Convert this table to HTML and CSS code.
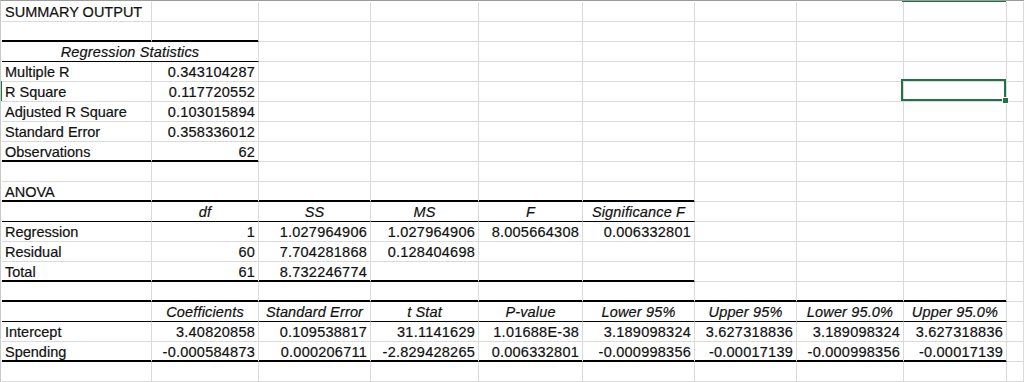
FILE: index.html
```html
<!DOCTYPE html>
<html>
<head>
<meta charset="utf-8">
<link rel="stylesheet" href="styles.css">
</head>
<body>
<div class="sheet">
  <div class="row"><div class="c">SUMMARY OUTPUT</div><div class="c"></div><div class="c"></div><div class="c"></div><div class="c"></div><div class="c"></div><div class="c"></div><div class="c"></div><div class="c"></div><div class="c"></div></div>
  <div class="row"><div class="c tk"></div><div class="c tk"></div><div class="c"></div><div class="c"></div><div class="c"></div><div class="c"></div><div class="c"></div><div class="c"></div><div class="c"></div><div class="c"></div></div>
  <div class="row"><div class="c hd span2 tn">Regression Statistics</div><div class="c"></div><div class="c"></div><div class="c"></div><div class="c"></div><div class="c"></div><div class="c"></div><div class="c"></div><div class="c"></div></div>
  <div class="row"><div class="c">Multiple R</div><div class="c n">0.343104287</div><div class="c"></div><div class="c"></div><div class="c"></div><div class="c"></div><div class="c"></div><div class="c"></div><div class="c"></div><div class="c"></div></div>
  <div class="row"><div class="c">R Square</div><div class="c n">0.117720552</div><div class="c"></div><div class="c"></div><div class="c"></div><div class="c"></div><div class="c"></div><div class="c"></div><div class="c"></div><div class="c"></div></div>
  <div class="row"><div class="c">Adjusted R Square</div><div class="c n">0.103015894</div><div class="c"></div><div class="c"></div><div class="c"></div><div class="c"></div><div class="c"></div><div class="c"></div><div class="c"></div><div class="c"></div></div>
  <div class="row"><div class="c">Standard Error</div><div class="c n">0.358336012</div><div class="c"></div><div class="c"></div><div class="c"></div><div class="c"></div><div class="c"></div><div class="c"></div><div class="c"></div><div class="c"></div></div>
  <div class="row"><div class="c tk">Observations</div><div class="c n tk">62</div><div class="c"></div><div class="c"></div><div class="c"></div><div class="c"></div><div class="c"></div><div class="c"></div><div class="c"></div><div class="c"></div></div>
  <div class="row"><div class="c"></div><div class="c"></div><div class="c"></div><div class="c"></div><div class="c"></div><div class="c"></div><div class="c"></div><div class="c"></div><div class="c"></div><div class="c"></div></div>
  <div class="row"><div class="c tk">ANOVA</div><div class="c tk"></div><div class="c tk"></div><div class="c tk"></div><div class="c tk"></div><div class="c tk"></div><div class="c"></div><div class="c"></div><div class="c"></div><div class="c"></div></div>
  <div class="row"><div class="c tn"></div><div class="c hd tn">df</div><div class="c hd tn">SS</div><div class="c hd tn">MS</div><div class="c hd tn">F</div><div class="c hd tn">Significance F</div><div class="c"></div><div class="c"></div><div class="c"></div><div class="c"></div></div>
  <div class="row"><div class="c">Regression</div><div class="c n">1</div><div class="c n">1.027964906</div><div class="c n">1.027964906</div><div class="c n">8.005664308</div><div class="c n">0.006332801</div><div class="c"></div><div class="c"></div><div class="c"></div><div class="c"></div></div>
  <div class="row"><div class="c">Residual</div><div class="c n">60</div><div class="c n">7.704281868</div><div class="c n">0.128404698</div><div class="c"></div><div class="c"></div><div class="c"></div><div class="c"></div><div class="c"></div><div class="c"></div></div>
  <div class="row"><div class="c tk">Total</div><div class="c n tk">61</div><div class="c n tk">8.732246774</div><div class="c tk"></div><div class="c tk"></div><div class="c tk"></div><div class="c"></div><div class="c"></div><div class="c"></div><div class="c"></div></div>
  <div class="row"><div class="c tk"></div><div class="c tk"></div><div class="c tk"></div><div class="c tk"></div><div class="c tk"></div><div class="c tk"></div><div class="c tk"></div><div class="c tk"></div><div class="c tk"></div><div class="c"></div></div>
  <div class="row"><div class="c tn"></div><div class="c hd tn">Coefficients</div><div class="c hd tn">Standard Error</div><div class="c hd tn">t Stat</div><div class="c hd tn">P-value</div><div class="c hd tn">Lower 95%</div><div class="c hd tn">Upper 95%</div><div class="c hd tn">Lower 95.0%</div><div class="c hd tn">Upper 95.0%</div><div class="c"></div></div>
  <div class="row"><div class="c">Intercept</div><div class="c n">3.40820858</div><div class="c n">0.109538817</div><div class="c n">31.1141629</div><div class="c n">1.01688E-38</div><div class="c n">3.189098324</div><div class="c n">3.627318836</div><div class="c n">3.189098324</div><div class="c n">3.627318836</div><div class="c"></div></div>
  <div class="row"><div class="c tk">Spending</div><div class="c n tk">-0.000584873</div><div class="c n tk">0.000206711</div><div class="c n tk">-2.829428265</div><div class="c n tk">0.006332801</div><div class="c n tk">-0.000998356</div><div class="c n tk">-0.00017139</div><div class="c n tk">-0.000998356</div><div class="c n tk">-0.00017139</div><div class="c"></div></div>
  <div class="row"><div class="c"></div><div class="c"></div><div class="c"></div><div class="c"></div><div class="c"></div><div class="c"></div><div class="c"></div><div class="c"></div><div class="c"></div><div class="c"></div></div>

  <div class="col-mark"></div>
  <div class="row-mark"></div>
  <div class="sel"><div class="handle"></div></div>
</div>
</body>
</html>
```
FILE: styles.css
```css
html, body {
  margin: 0;
  padding: 0;
  background: #fff;
}

.sheet {
  position: relative;
  width: 1024px;
  height: 382px;
  overflow: hidden;
  box-sizing: border-box;
  border-top: 1px solid #9c9c9c;
  padding-top: 1px;
  border-left: 1px solid #c8c8c8;
  padding-left: 1px;
  display: flex;
  flex-direction: column;
  font-family: "Liberation Sans", Arial, sans-serif;
  font-size: 14.5px;
  color: #111;
  -webkit-text-stroke: 0.2px #111;
}

.row {
  display: grid;
  grid-template-columns: 150px 107px 112px 108px 104px 112px 102px 107px 103px 1fr;
  height: 20px;
  flex: none;
}

.c {
  box-sizing: border-box;
  height: 20px;
  border-right: 1px solid #dadada;
  border-bottom: 1px solid #dadada;
  padding: 0 3px;
  line-height: 20px;
  white-space: nowrap;
  overflow: hidden;
}

.span2 {
  grid-column: span 2;
}

.n {
  text-align: right;
  letter-spacing: 0.24px;
}

.hd {
  text-align: center;
  font-style: italic;
  letter-spacing: 0.15px;
}

.tn {
  border-bottom-color: #000;
}

.tk {
  border-bottom-color: #000;
  box-shadow: inset 0 -1px 0 #000;
}

.col-mark {
  position: absolute;
  top: -1px;
  left: 901px;
  width: 104px;
  height: 2px;
  background: #217346;
}

.row-mark {
  position: absolute;
  top: 80px;
  left: -1px;
  width: 2px;
  height: 20px;
  background: #217346;
}

.sel {
  position: absolute;
  top: 78px;
  left: 900px;
  width: 105px;
  height: 22px;
  box-sizing: border-box;
  border: 2px solid #217346;
}

.handle {
  position: absolute;
  right: -5px;
  bottom: -5px;
  width: 7px;
  height: 7px;
  box-sizing: border-box;
  background: #217346;
  border: 1px solid #fff;
}
```
